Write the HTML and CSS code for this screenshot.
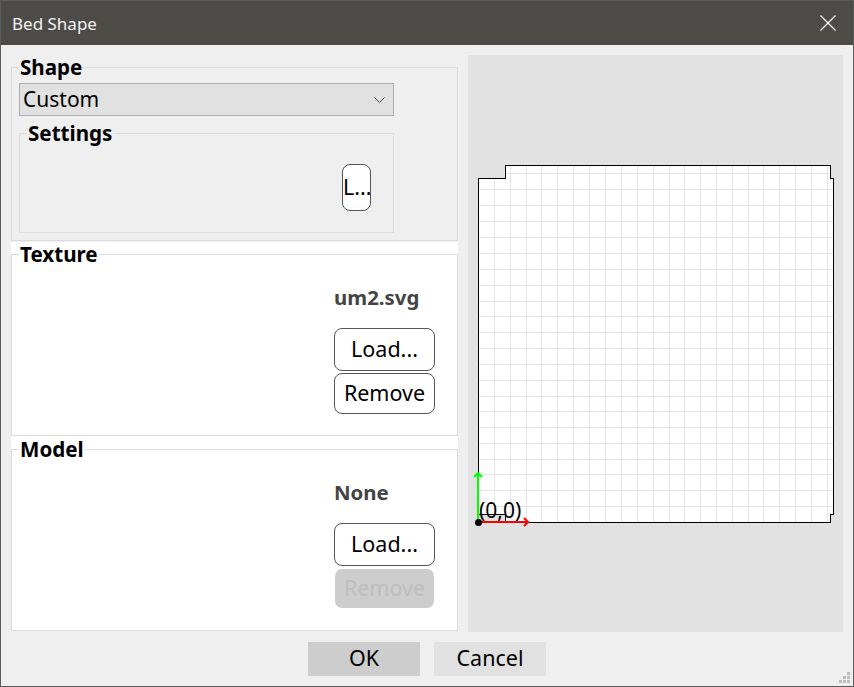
FILE: index.html
```html
<!DOCTYPE html>
<html lang="en">
<head>
<meta charset="utf-8">
<title>Bed Shape</title>
<link rel="stylesheet" href="styles.css">
</head>
<body>
<div class="window">
  <header class="titlebar">
    <span class="title">Bed Shape</span>
    <svg class="close" viewBox="0 0 16 16" width="16" height="16"><path d="M.5.5l15 15M15.5.5l-15 15"/></svg>
  </header>
  <main class="content">
    <section class="left">
      <fieldset class="group shape">
        <legend>Shape</legend>
        <div class="select">
          <span>Custom</span>
          <svg class="chev" viewBox="0 0 11 6" width="11" height="6"><path d="M.5.5l5 5 5-5"/></svg>
        </div>
        <fieldset class="group settings">
          <legend>Settings</legend>
          <button class="btn narrow">L...</button>
        </fieldset>
      </fieldset>
      <div class="panel">
        <fieldset class="group loader">
          <legend>Texture</legend>
          <div class="column">
            <div class="filename">um2.svg</div>
            <button class="btn tall">Load...</button>
            <button class="btn">Remove</button>
          </div>
        </fieldset>
      </div>
      <div class="panel model">
        <fieldset class="group loader">
          <legend>Model</legend>
          <div class="column">
            <div class="filename">None</div>
            <button class="btn tall">Load...</button>
            <button class="btn off" disabled>Remove</button>
          </div>
        </fieldset>
      </div>
    </section>
    <svg class="canvas" viewBox="468 55 375 577" width="375" height="577">
      <path class="bed" d="M478.5 178.5H505.5V165.5H830.5V178.5H833.5V514.5H830.5V522.5H505.5V514.5H478.5Z"/>
      <path class="grid" d="M494.5 178V514M510.5 166V522M526.5 166V522M541.5 166V522M557.5 166V522M573.5 166V522M589.5 166V522M605.5 166V522M621.5 166V522M637.5 166V522M653.5 166V522M669.5 166V522M684.5 166V522M700.5 166V522M716.5 166V522M732.5 166V522M748.5 166V522M763.5 166V522M779.5 166V522M795.5 166V522M811.5 166V522M827.5 166V522"/>
      <path class="grid" d="M505 173.5H830M479 189.5H833M479 205.5H833M479 221.5H833M479 237.5H833M479 253.5H833M479 269.5H833M479 285.5H833M479 301.5H833M479 316.5H833M479 332.5H833M479 348.5H833M479 364.5H833M479 380.5H833M479 396.5H833M479 411.5H833M479 427.5H833M479 443.5H833M479 459.5H833M479 474.5H833M479 490.5H833M479 506.5H833"/>
      <path class="outline" d="M478.5 178.5H505.5V165.5H830.5V178.5H833.5V514.5H830.5V522.5H505.5V514.5H478.5Z"/>
      <text class="origin" x="479" y="518">(0,0)</text>
      <path class="axis-y" d="M478 522V473M474 477L478 473L482 477"/>
      <path class="axis-x" d="M478 522H528M524 518L528 522L524 526"/>
      <circle cx="478.5" cy="522.5" r="3.5"/>
    </svg>
  </main>
  <footer class="footer">
    <button class="action primary">OK</button>
    <button class="action">Cancel</button>
    <svg class="grip" viewBox="0 0 12 12" width="12" height="12"><path d="M8 0h3v3H8zM4 4h3v3H4zM8 4h3v3H8zM0 8h3v3H0zM4 8h3v3H4zM8 8h3v3H8z"/></svg>
  </footer>
</div>
</body>
</html>
```
FILE: styles.css
```css
* { box-sizing: border-box; }
html, body { margin: 0; height: 100%; }
body { font-family: "Noto Sans", "Open Sans", sans-serif; color: #000; }
.window {
  position: relative;
  width: 854px;
  height: 687px;
  background: #efefef;
  border: 1px solid #5c5c5c;
  display: flex;
  flex-direction: column;
}
.titlebar {
  height: 44px;
  flex: none;
  background: #4d4b48;
  color: #f2f2f2;
  display: flex;
  align-items: center;
  justify-content: space-between;
  padding: 0 17px 0 11px;
  font-size: 17px;
}
.close { fill: none; stroke: #fff; stroke-width: 1.2; }
.content {
  flex: none;
  display: flex;
  gap: 10px;
  padding: 10px 10px 0;
  height: 587px;
}
.left { width: 447px; display: flex; flex-direction: column; }
.group {
  margin: 0;
  padding: 0;
  border: 1px solid #dcdcdc;
  min-width: 0;
}
.group legend {
  font-size: 20.6px;
  line-height: 24px;
  font-weight: 700;
  padding: 0 1px;
  margin-left: 7px;
  height: 24px;
  white-space: nowrap;
}
.shape { height: 186px; padding: 4px 7px 0; }
.shape legend { margin-left: 0; }
.shape .settings legend { margin-left: 7px; }
.select {
  width: 375px;
  height: 33px;
  background: #e1e1e1;
  border: 1px solid #adadad;
  display: flex;
  align-items: center;
  justify-content: space-between;
  padding: 0 8px 2px 3px;
  font-size: 21px;
}
.chev { fill: none; stroke: #444; stroke-width: 1; margin-top: 2px; }
.settings {
  margin-top: 5px;
  width: 375px;
  height: 112px;
  padding: 19px 22px 0 0;
  display: flex;
  flex-direction: column;
  align-items: flex-end;
}
.btn {
  font: inherit;
  font-size: 21.5px;
  color: #000;
  width: 101px;
  height: 41px;
  padding: 0 0 2px;
  background: #fff;
  border: 1px solid #555;
  border-radius: 8px;
  overflow: hidden;
  white-space: nowrap;
  display: block;
}
.btn.tall { height: 43px; margin-bottom: 2px; }
.btn.narrow { width: 29px; height: 47px; }
.btn.off {
  background: #cdcdcd;
  background-clip: padding-box;
  border-color: transparent;
  color: #bdbdbd;
}
.panel { background: #fff; height: 194px; margin-top: 1px; }
.panel.model { height: 195px; margin-top: 0; padding-top: 1px; }
.loader { height: 194px; padding: 19px 22px 0 0; }
.column { width: 101px; margin-left: auto; }
.filename {
  font-size: 20.4px;
  line-height: 24px;
  font-weight: 700;
  color: #444;
  margin-bottom: 19px;
  white-space: nowrap;
}
.canvas { flex: none; background: #e2e2e2; display: block; }
.bed { fill: #fff; }
.grid { fill: none; stroke: #e6e6e6; stroke-width: 1; shape-rendering: crispEdges; }
.outline { fill: none; stroke: #000; stroke-width: 1; shape-rendering: crispEdges; }
.origin { font-size: 21px; fill: #000; }
.axis-y { fill: none; stroke: #0f0; stroke-width: 2; }
.axis-x { fill: none; stroke: #f00; stroke-width: 2; }
.footer {
  flex: none;
  display: flex;
  justify-content: center;
  gap: 14px;
  padding-top: 10px;
}
.action {
  font: inherit;
  font-size: 21.5px;
  width: 112px;
  height: 34px;
  padding: 0 0 3px;
  border: 0;
  background: #e1e1e1;
  color: #000;
}
.action.primary { background: #cdcdcd; }
.grip { position: absolute; right: 2px; bottom: 2px; fill: #bdbdbd; }
```
